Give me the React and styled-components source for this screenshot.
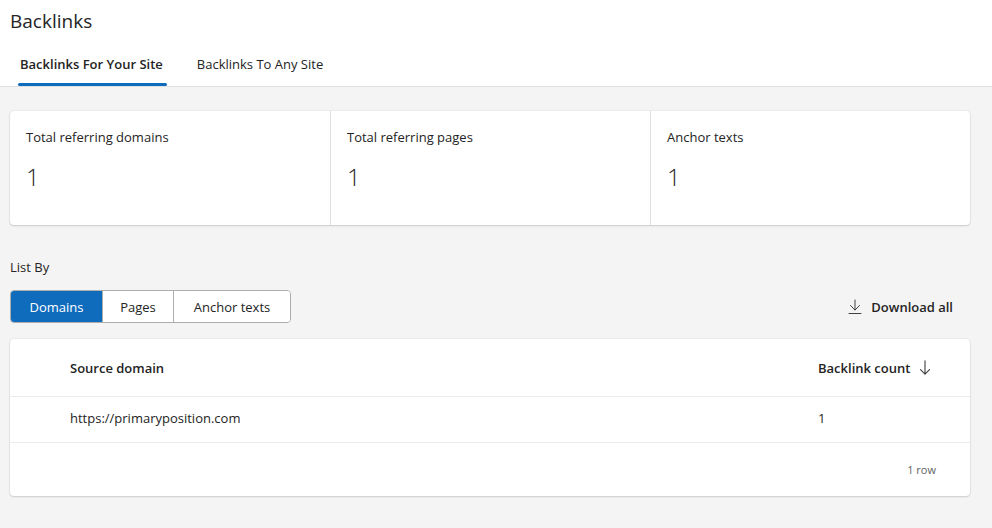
import React, { useState } from "react";
import styled, { createGlobalStyle } from "styled-components";

const GlobalStyle = createGlobalStyle`
  html, body {
    margin: 0;
    padding: 0;
    background: #f4f4f4;
    font-family: "Segoe UI", "Open Sans", "Noto Sans", sans-serif;
    color: #242424;
  }
`;

const Page = styled.div`
  width: 992px;
  height: 528px;
  overflow: hidden;
  background: #f4f4f4;
`;

const Header = styled.div`
  background: #fff;
  border-bottom: 1px solid #e0e0e0;
  padding: 0 10px;
`;

const Title = styled.h1`
  margin: 0;
  padding-top: 8px;
  font-size: 19px;
  font-weight: 400;
  line-height: 26px;
  color: #242424;
`;

const Tabs = styled.div`
  display: flex;
  margin-top: 16px;
  gap: 14px;
`;

const Tab = styled.button`
  border: none;
  background: none;
  font-family: inherit;
  font-size: 13px;
  font-weight: ${({ $active }) => ($active ? 600 : 400)};
  color: #242424;
  padding: 4px 10px 0;
  height: 36px;
  line-height: 20px;
  display: flex;
  align-items: flex-start;
  cursor: pointer;
  position: relative;
  &::after {
    content: "";
    position: absolute;
    left: 8px;
    right: 6px;
    bottom: 0;
    height: 3px;
    border-radius: 2px;
    background: ${({ $active }) => ($active ? "#0f6cbd" : "transparent")};
  }
`;

const Body = styled.div`
  padding: 24px 22px 0 10px;
`;

const Card = styled.div`
  background: #fff;
  border-radius: 4px;
  box-shadow: 0 0 2px rgba(0, 0, 0, 0.12), 0 1px 2px rgba(0, 0, 0, 0.14);
`;

const Stats = styled(Card)`
  display: grid;
  grid-template-columns: repeat(3, 1fr);
  height: 114px;
`;

const Stat = styled.div`
  padding: 16px 16px;
  border-left: ${({ $first }) => ($first ? "none" : "1px solid #e0e0e0")};
`;

const StatLabel = styled.div`
  font-size: 13px;
  line-height: 20px;
`;

const StatValue = styled.div`
  margin-top: 16px;
  font-size: 24px;
  line-height: 28px;
  font-weight: 300;
  color: #242424;
`;

const ListBy = styled.div`
  margin-top: 32px;
  font-size: 13px;
  line-height: 20px;
`;

const Toolbar = styled.div`
  display: flex;
  justify-content: space-between;
  align-items: center;
  margin-top: 13px;
`;

const Segments = styled.div`
  display: flex;
  border: 1px solid #adadad;
  border-radius: 4px;
  overflow: hidden;
  height: 31px;
`;

const Segment = styled.button`
  border: none;
  border-left: ${({ $first }) => ($first ? "none" : "1px solid #adadad")};
  background: ${({ $active }) => ($active ? "#0f6cbd" : "#fff")};
  color: ${({ $active }) => ($active ? "#fff" : "#242424")};
  font-family: inherit;
  font-size: 13px;
  width: ${({ $w }) => $w}px;
  padding: 0;
  cursor: pointer;
`;

const Download = styled.button`
  display: flex;
  align-items: center;
  gap: 9px;
  border: none;
  background: none;
  font-family: inherit;
  font-size: 13px;
  font-weight: 600;
  color: #242424;
  padding: 0 17px 0 0;
  cursor: pointer;
`;

const Table = styled(Card)`
  margin-top: 16px;
`;

const Row = styled.div`
  display: grid;
  grid-template-columns: 808px 1fr;
  height: ${({ $h }) => $h}px;
  box-sizing: border-box;
  padding-bottom: ${({ $pb }) => $pb || 0}px;
  align-items: center;
  border-bottom: 1px solid #ebebeb;
  font-size: 13px;
  color: #242424;
  font-weight: ${({ $head }) => ($head ? 600 : 400)};
`;

const Cell = styled.div`
  padding-left: ${({ $pl }) => $pl || 0}px;
  display: flex;
  align-items: center;
  gap: 6px;
`;

const Footer = styled.div`
  height: 53px;
  display: flex;
  justify-content: flex-end;
  align-items: center;
  padding-right: 34px;
  font-size: 11px;
  color: #616161;
`;

const DownArrow = ({ size = 16, color = "#424242" }) => (
  <svg width={size} height={size} viewBox="0 0 16 16" fill="none">
    <path d="M8 1.5v12M4 9.5l4 4 4-4" stroke={color} strokeWidth="1" strokeLinecap="round" strokeLinejoin="round" />
  </svg>
);

const DownloadIcon = () => (
  <svg width="14" height="16" viewBox="0 0 14 16" fill="none">
    <path d="M7 1v10M2.5 6.5L7 11l4.5-4.5" stroke="#424242" strokeWidth="1" strokeLinecap="round" strokeLinejoin="round" />
    <path d="M1 14.5h12" stroke="#424242" strokeWidth="1" strokeLinecap="round" />
  </svg>
);

const stats = [
  { label: "Total referring domains", value: 1 },
  { label: "Total referring pages", value: 1 },
  { label: "Anchor texts", value: 1 },
];

const segments = [
  { id: "domains", label: "Domains", w: 91 },
  { id: "pages", label: "Pages", w: 71 },
  { id: "anchors", label: "Anchor texts", w: 117 },
];

export default function App() {
  const [tab, setTab] = useState(0);
  const [seg, setSeg] = useState("domains");

  return (
    <Page>
      <GlobalStyle />
      <Header>
        <Title>Backlinks</Title>
        <Tabs>
          <Tab $active={tab === 0} onClick={() => setTab(0)}>Backlinks For Your Site</Tab>
          <Tab $active={tab === 1} onClick={() => setTab(1)}>Backlinks To Any Site</Tab>
        </Tabs>
      </Header>
      <Body>
        <Stats>
          {stats.map((s, i) => (
            <Stat key={s.label} $first={i === 0}>
              <StatLabel>{s.label}</StatLabel>
              <StatValue>{s.value}</StatValue>
            </Stat>
          ))}
        </Stats>
        <ListBy>List By</ListBy>
        <Toolbar>
          <Segments>
            {segments.map((s, i) => (
              <Segment
                key={s.id}
                $first={i === 0}
                $active={seg === s.id}
                $w={s.w}
                onClick={() => setSeg(s.id)}
              >
                {s.label}
              </Segment>
            ))}
          </Segments>
          <Download>
            <DownloadIcon />
            Download all
          </Download>
        </Toolbar>
        <Table>
          <Row $head $h={58}>
            <Cell $pl={60}>Source domain</Cell>
            <Cell>
              Backlink count <DownArrow size={18} />
            </Cell>
          </Row>
          <Row $h={46} $pb={4}>
            <Cell $pl={60}>https://primaryposition.com</Cell>
            <Cell>1</Cell>
          </Row>
          <Footer>1 row</Footer>
        </Table>
      </Body>
    </Page>
  );
}
